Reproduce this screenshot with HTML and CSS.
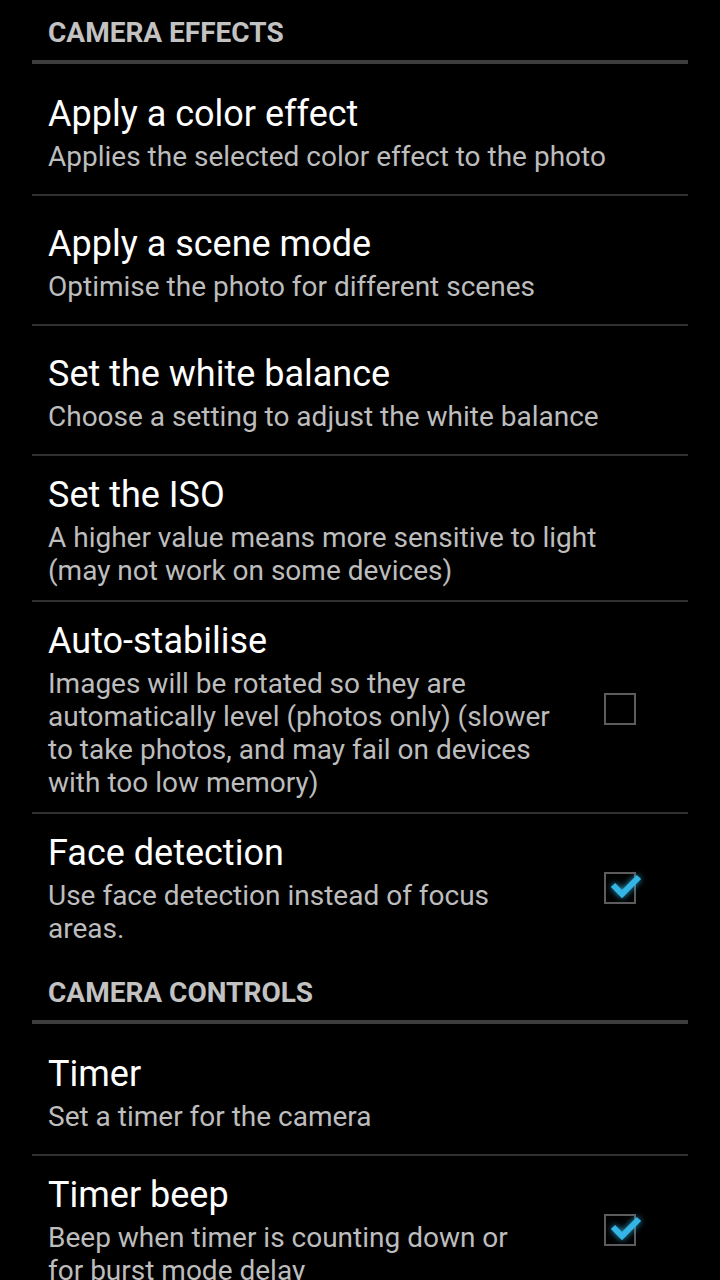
FILE: index.html
```html
<!DOCTYPE html>
<html lang="en">
<head>
    <meta charset="UTF-8">
    <meta name="viewport" content="width=device-width, initial-scale=1.0">
    <title>Camera Settings</title>
    <link rel="stylesheet" href="styles.css">
</head>
<body>
    <div class="list">
        <div class="category">
            <h2>CAMERA EFFECTS</h2>
        </div>

        <div class="row">
            <div class="text">
                <div class="title">Apply a color effect</div>
                <div class="summary">Applies the selected color effect to the photo</div>
            </div>
        </div>
        <div class="row">
            <div class="text">
                <div class="title">Apply a scene mode</div>
                <div class="summary">Optimise the photo for different scenes</div>
            </div>
        </div>
        <div class="row">
            <div class="text">
                <div class="title">Set the white balance</div>
                <div class="summary">Choose a setting to adjust the white balance</div>
            </div>
        </div>
        <div class="row">
            <div class="text">
                <div class="title">Set the ISO</div>
                <div class="summary">A higher value means more sensitive to light (may not work on some devices)</div>
            </div>
        </div>
        <div class="row">
            <div class="text">
                <div class="title">Auto-stabilise</div>
                <div class="summary">Images will be rotated so they are automatically level (photos only) (slower to take photos, and may fail on devices with too low memory)</div>
            </div>
            <span class="checkbox"></span>
        </div>
        <div class="row last">
            <div class="text">
                <div class="title">Face detection</div>
                <div class="summary">Use face detection instead of focus areas.</div>
            </div>
            <span class="checkbox checked">
                <svg class="tick" width="40" height="32" viewBox="0 0 40 32">
                    <path d="M9 13 L18 22 L35 5" fill="none" stroke="#33b5e5" stroke-width="6"/>
                </svg>
            </span>
        </div>

        <div class="category">
            <h2>CAMERA CONTROLS</h2>
        </div>

        <div class="row">
            <div class="text">
                <div class="title">Timer</div>
                <div class="summary">Set a timer for the camera</div>
            </div>
        </div>
        <div class="row">
            <div class="text">
                <div class="title">Timer beep</div>
                <div class="summary">Beep when timer is counting down or<br>for burst mode delay</div>
            </div>
            <span class="checkbox checked">
                <svg class="tick" width="40" height="32" viewBox="0 0 40 32">
                    <path d="M9 13 L18 22 L35 5" fill="none" stroke="#33b5e5" stroke-width="6"/>
                </svg>
            </span>
        </div>
    </div>
</body>
</html>
```

FILE: styles.css
```css
body {
    margin: 0;
    padding: 0;
    background-color: #000;
    font-family: Roboto, "Noto Sans", sans-serif;
    height: 1280px;
    overflow: hidden;
}

.list {
    padding: 0 32px;
}

.category {
    padding: 6px 16px 0;
    height: 54px;
    border-bottom: 4px solid #3d3d3d;
    margin-bottom: 2px;
}

.category h2 {
    margin: 0;
    font-size: 28px;
    line-height: 54px;
    font-weight: bold;
    color: #c2c2c2;
}

.row {
    display: flex;
    align-items: center;
    box-sizing: border-box;
    min-height: 130px;
    padding: 17px 36px 13px 16px;
    border-bottom: 2px solid #303030;
}

.row.last {
    border-bottom-color: transparent;
}

.text {
    flex: 1;
}

.title {
    font-size: 36px;
    line-height: 44px;
    color: #fff;
}

.summary {
    margin-top: 4px;
    font-size: 28px;
    line-height: 33px;
    color: #bdbdbd;
}

.checkbox {
    position: relative;
    flex: none;
    box-sizing: border-box;
    width: 32px;
    height: 32px;
    margin: 0 16px 0 36px;
    border: 2px solid #5c5c5c;
}

.tick {
    position: absolute;
    left: -2px;
    top: -2px;
    overflow: visible;
    filter: drop-shadow(0 0 3px rgba(51, 181, 229, 0.9));
}
```
